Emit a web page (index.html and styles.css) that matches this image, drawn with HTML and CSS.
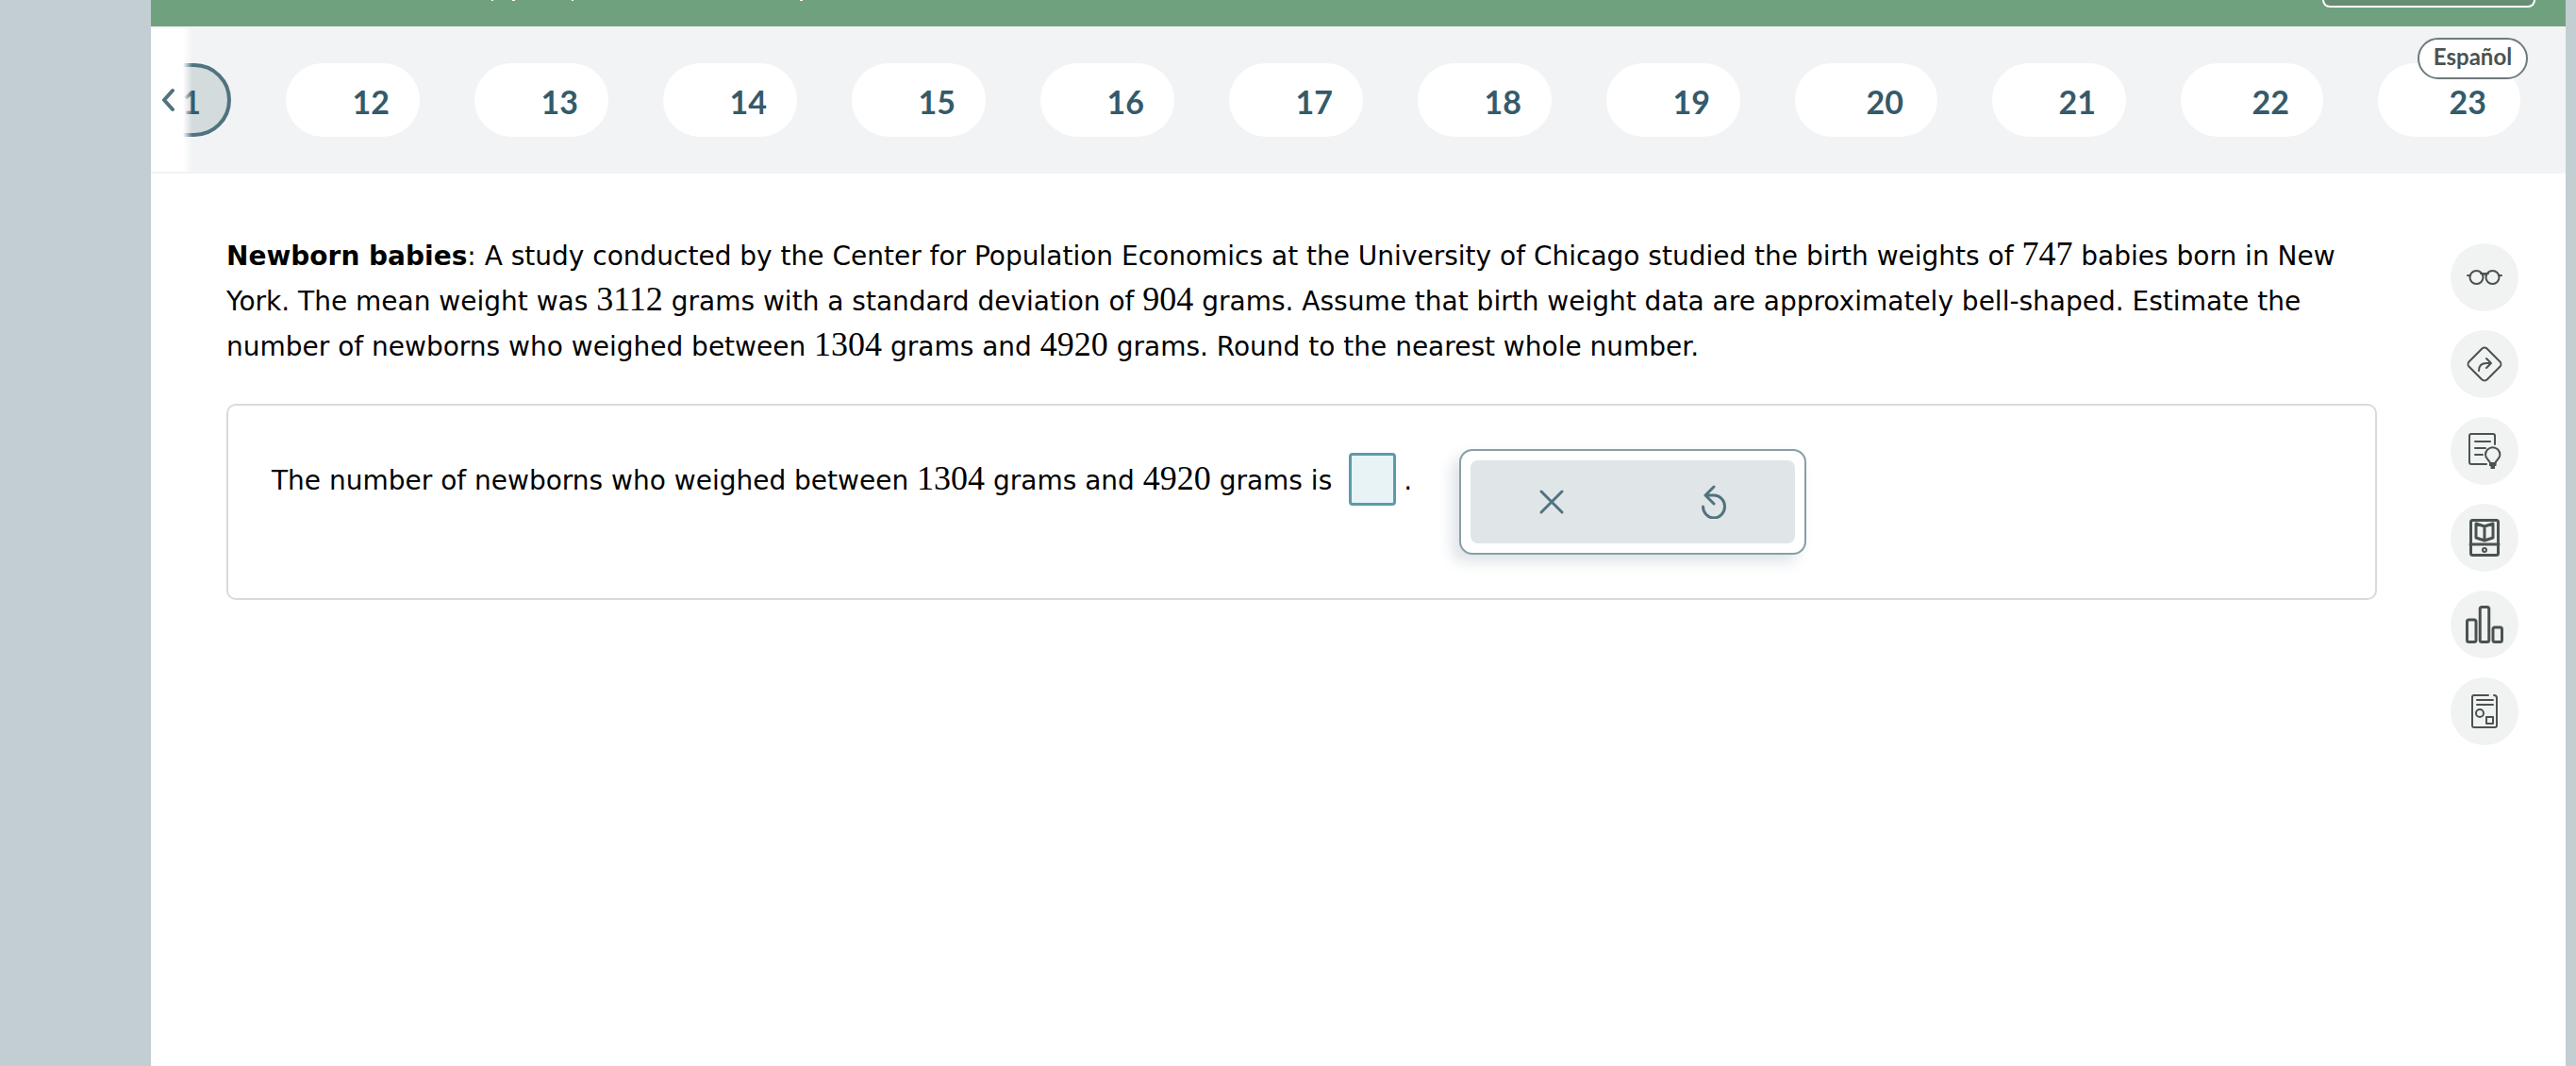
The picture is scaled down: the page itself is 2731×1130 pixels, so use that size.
FILE: index.html
```html
<!DOCTYPE html>
<html lang="en">
<head>
<meta charset="utf-8">
<title>Newborn babies</title>
<link rel="stylesheet" href="styles.css">
</head>
<body>
<div class="app">
  <header class="topbar">
    <svg class="topbar-marks" width="340" height="2" viewBox="0 0 340 2" aria-hidden="true"><path d="M1 0h2v1H1zM23 0h3v1h-3zM86 0h2v1h-2zM328 0h3v1h-3z"/></svg>
    <button class="topbar-button" type="button" aria-label="Account menu"></button>
  </header>
  <nav class="questions" aria-label="Questions">
    <a class="pill current" href="#q11">11</a>
    <a class="pill" href="#q12">12</a>
    <a class="pill" href="#q13">13</a>
    <a class="pill" href="#q14">14</a>
    <a class="pill" href="#q15">15</a>
    <a class="pill" href="#q16">16</a>
    <a class="pill" href="#q17">17</a>
    <a class="pill" href="#q18">18</a>
    <a class="pill" href="#q19">19</a>
    <a class="pill wide" href="#q20">20</a>
    <a class="pill" href="#q21">21</a>
    <a class="pill wide" href="#q22">22</a>
    <a class="pill wide" href="#q23">23</a>
    <button class="scroll-back" type="button" aria-label="Previous questions">
      <svg width="14" height="26" viewBox="0 0 14 26"><path d="M12 3L3 13l9 10"/></svg>
    </button>
    <button class="language" type="button">Español</button>
  </nav>
  <div class="workspace">
    <main class="problem">
      <p class="prompt"><b>Newborn babies</b>: A study conducted by the Center for Population Economics at the University of Chicago studied the birth weights of <span class="num">747</span> babies born in New York. The mean weight was <span class="num">3112</span> grams with a standard deviation of <span class="num">904</span> grams. Assume that birth weight data are approximately bell-shaped. Estimate the number of newborns who weighed between <span class="num">1304</span> grams and <span class="num">4920</span> grams. Round to the nearest whole number.</p>
      <section class="answer">
        <div class="answer-line">
          <label for="count">The number of newborns who weighed between <span class="num">1304</span> grams and <span class="num">4920</span> grams is</label>
          <input id="count" class="answer-input" type="text">
          <span class="stop">.</span>
        </div>
        <div class="palette">
          <button type="button" aria-label="Clear"><svg width="28" height="28" viewBox="0 0 28 28"><path d="M3 3l22 22M25 3L3 25"/></svg></button>
          <button type="button" aria-label="Undo"><svg width="28" height="36" viewBox="0 0 28 36"><path d="M14 2L5 11l9 9M5 11h9a11.500 12 0 1 1-11.500 12"/></svg></button>
        </div>
      </section>
    </main>
    <aside class="tools">
      <button type="button" aria-label="Reading view"><svg width="40" height="40" viewBox="0 0 40 40"><circle cx="11.500" cy="20" r="7"/><circle cx="28.500" cy="20" r="7"/><path d="M2 18h3M35 18h3M16 16h8M18 18c1-2 3-2 4 0"/></svg></button>
      <button type="button" aria-label="Directions"><svg width="40" height="40" viewBox="0 0 40 40"><rect x="6.500" y="6.500" width="27" height="27" rx="4" transform="rotate(45 20 20)"/><path d="M14 27c0-5 3-8 8-8h5M22 14l5 5-5 5"/></svg></button>
      <button type="button" aria-label="Explanation"><svg width="40" height="40" viewBox="0 0 40 40"><path d="M31 13V4q0-2-2-2H6Q4 2 4 4v28q0 2 2 2h16M10 10h16M10 17h11M10 24h8"/><path d="M26 33c0-3-5-4-5-9a7.700 7.700 0 0 1 15.400 0c0 5-5 6-5 9z"/><path class="solid" d="M25 32h7.500v4h-1.500v3h-4.500v-3H25z"/></svg></button>
      <button type="button" aria-label="eBook"><svg class="heavy" width="40" height="44" viewBox="0 0 40 44"><rect x="5.500" y="3.500" width="29" height="37" rx="2"/><path d="M5 29h30M20 10v15M11 7l9 3 9-3v15l-9 3-9-3z"/><circle class="thin" cx="20" cy="35" r="2"/></svg></button>
      <button type="button" aria-label="Data tools"><svg class="heavy" width="44" height="44" viewBox="0 0 44 44"><rect x="3.500" y="17" width="9.500" height="23.500" rx="2"/><rect x="17.250" y="3.500" width="9.500" height="37" rx="2"/><rect x="31" y="25" width="9.500" height="15.500" rx="2"/></svg></button>
      <button type="button" aria-label="Formula sheet"><svg width="40" height="40" viewBox="0 0 40 40"><path d="M24 3H9Q7 3 7 5v30q0 2 2 2h22q2 0 2-2V6q0-3-3-3M12 8h17M12 13h17"/><circle cx="15" cy="22" r="4"/><rect x="22" y="26" width="7" height="7"/></svg></button>
    </aside>
  </div>
</div>
</body>
</html>
```
FILE: styles.css
```css
* { box-sizing: border-box; }
body {
  margin: 0;
  background: #c3ced3;
  font-family: "DejaVu Sans", sans-serif;
  color: #000;
}
button { padding: 0; border: 0; font: inherit; cursor: pointer; }
svg {
  display: block;
  fill: none;
  stroke: #4a5350;
  stroke-width: 2;
  stroke-linecap: round;
  stroke-linejoin: round;
}
.heavy { stroke-width: 3; }
.thin { stroke-width: 2; }
.solid { fill: #4a5350; stroke: none; }

.app {
  min-height: 100vh;
  margin: 0 11px 0 160px;
  background: #fff;
}

.topbar {
  display: flex;
  justify-content: space-between;
  align-items: flex-start;
  height: 28px;
  padding: 0 32px 0 360px;
  background: #6fa17f;
}
.topbar-marks { fill: #fff; stroke: none; }
.topbar-button {
  width: 226px;
  height: 8px;
  border: 2px solid #fff;
  border-top: 0;
  border-radius: 0 0 8px 8px;
  background: #678d75;
}

.questions {
  position: relative;
  display: flex;
  justify-content: flex-end;
  align-items: center;
  gap: 58px;
  height: 156px;
  padding: 0 48px 0 0;
  overflow: hidden;
  background: #f1f3f5;
}
.pill {
  flex: none;
  width: 142px;
  height: 78px;
  padding-right: 32px;
  border-radius: 39px;
  background: #fff;
  color: #355a69;
  font: 700 34px/82px Lato, sans-serif;
  text-align: right;
  text-decoration: none;
}
.wide { width: 151px; padding-right: 36px; }
.current {
  border: 4px solid #51727f;
  background: #d3dbdd;
  line-height: 74px;
  padding-right: 28px;
}
.scroll-back {
  position: absolute;
  left: 0;
  top: 2px;
  bottom: 2px;
  width: 44px;
  padding-right: 8px;
  background: linear-gradient(to right, #fff 34px, rgba(255, 255, 255, 0));
}
.scroll-back svg { margin: 0 auto; stroke: #51727f; stroke-width: 4; }
.language {
  position: absolute;
  top: 12px;
  right: 40px;
  width: 117px;
  height: 44px;
  padding-bottom: 4px;
  border: 2px solid #6d7a7b;
  border-radius: 22px;
  background: #fff;
  color: #4a5350;
  font: 700 24px/36px Lato, sans-serif;
}

.workspace {
  display: flex;
  justify-content: space-between;
  gap: 78px;
  padding: 64px 50px 0 80px;
}
.problem { flex: 1; min-width: 0; }
.prompt, .answer { font-size: 28px; line-height: 48px; }
.prompt { margin: 0 0 36px; }
.num {
  font-family: "Liberation Serif", serif;
  font-size: 36px;
  line-height: 1;
}
.answer {
  display: flex;
  align-items: flex-start;
  gap: 50px;
  min-height: 208px;
  padding: 46px;
  border: 2px solid #d5dbde;
  border-radius: 10px;
}
.answer-line {
  display: flex;
  align-items: flex-start;
  gap: 8px;
  padding-top: 4px;
}
.answer-line label, .stop { padding-top: 6px; }
.answer-input {
  width: 50px;
  height: 56px;
  margin-left: 10px;
  padding: 0 8px;
  border: 3px solid #5b9bab;
  border-radius: 4px;
  background: #e8f3f5;
  font: 28px "Liberation Serif", serif;
}
.palette {
  display: flex;
  width: 368px;
  height: 112px;
  padding: 10px;
  border: 2px solid #869fa8;
  border-radius: 14px;
  background: #fff;
  box-shadow: -8px 8px 16px #dfe4e7;
}
.palette button {
  flex: 1;
  display: flex;
  justify-content: center;
  align-items: center;
  background: #e0e5e7;
}
.palette button:first-child { border-radius: 8px 0 0 8px; }
.palette button:last-child { border-radius: 0 8px 8px 0; }
.palette svg { stroke: #51727f; stroke-width: 3; }

.tools {
  display: flex;
  flex-direction: column;
  gap: 20px;
  padding-top: 10px;
}
.tools button {
  display: flex;
  justify-content: center;
  align-items: center;
  width: 72px;
  height: 72px;
  border-radius: 50%;
  background: #f1f3f3;
}
```
